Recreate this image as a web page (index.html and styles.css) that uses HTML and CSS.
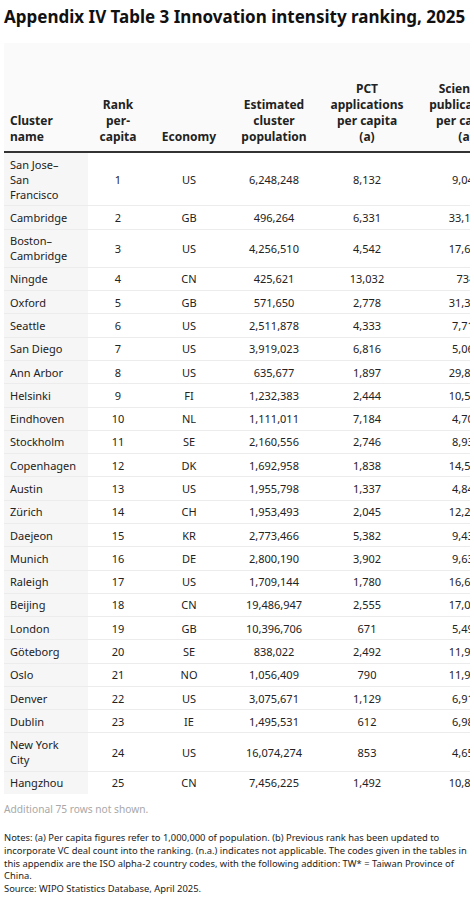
FILE: index.html
```html
<!DOCTYPE html>
<html lang="en">
<head>
<meta charset="utf-8">
<title>Appendix IV Table 3</title>
<link rel="stylesheet" href="styles.css">
</head>
<body>
<div class="page">
  <h1 class="title">Appendix IV Table 3 Innovation intensity ranking, 2025</h1>
  <div class="table-wrap">
    <table class="data">
      <colgroup>
        <col class="c-name"><col class="c-rank"><col class="c-eco"><col class="c-pop"><col class="c-pct"><col class="c-sci"><col class="c-more">
      </colgroup>
      <thead>
        <tr>
          <th class="left">Cluster<br>name</th>
          <th>Rank<br>per-<br>capita</th>
          <th>Economy</th>
          <th>Estimated<br>cluster<br>population</th>
          <th>PCT<br>applications<br>per capita<br>(a)</th>
          <th>Scientific<br>publications<br>per capita<br>(a)</th>
          <th>VC deal<br>count<br>per capita<br>(a)</th>
        </tr>
      </thead>
      <tbody>
        <tr><td class="name">San Jose–<br>San<br>Francisco</td><td>1</td><td>US</td><td>6,248,248</td><td>8,132</td><td>9,044</td><td>326</td></tr>
        <tr><td class="name">Cambridge</td><td>2</td><td>GB</td><td>496,264</td><td>6,331</td><td>33,130</td><td>149</td></tr>
        <tr><td class="name">Boston–<br>Cambridge</td><td>3</td><td>US</td><td>4,256,510</td><td>4,542</td><td>17,614</td><td>131</td></tr>
        <tr><td class="name">Ningde</td><td>4</td><td>CN</td><td>425,621</td><td>13,032</td><td>734</td><td>5</td></tr>
        <tr><td class="name">Oxford</td><td>5</td><td>GB</td><td>571,650</td><td>2,778</td><td>31,346</td><td>79</td></tr>
        <tr><td class="name">Seattle</td><td>6</td><td>US</td><td>2,511,878</td><td>4,333</td><td>7,717</td><td>88</td></tr>
        <tr><td class="name">San Diego</td><td>7</td><td>US</td><td>3,919,023</td><td>6,816</td><td>5,063</td><td>51</td></tr>
        <tr><td class="name">Ann Arbor</td><td>8</td><td>US</td><td>635,677</td><td>1,897</td><td>29,842</td><td>31</td></tr>
        <tr><td class="name">Helsinki</td><td>9</td><td>FI</td><td>1,232,383</td><td>2,444</td><td>10,512</td><td>39</td></tr>
        <tr><td class="name">Eindhoven</td><td>10</td><td>NL</td><td>1,111,011</td><td>7,184</td><td>4,703</td><td>12</td></tr>
        <tr><td class="name">Stockholm</td><td>11</td><td>SE</td><td>2,160,556</td><td>2,746</td><td>8,935</td><td>61</td></tr>
        <tr><td class="name">Copenhagen</td><td>12</td><td>DK</td><td>1,692,958</td><td>1,838</td><td>14,537</td><td>41</td></tr>
        <tr><td class="name">Austin</td><td>13</td><td>US</td><td>1,955,798</td><td>1,337</td><td>4,846</td><td>67</td></tr>
        <tr><td class="name">Zürich</td><td>14</td><td>CH</td><td>1,953,493</td><td>2,045</td><td>12,218</td><td>29</td></tr>
        <tr><td class="name">Daejeon</td><td>15</td><td>KR</td><td>2,773,466</td><td>5,382</td><td>9,431</td><td>8</td></tr>
        <tr><td class="name">Munich</td><td>16</td><td>DE</td><td>2,800,190</td><td>3,902</td><td>9,632</td><td>24</td></tr>
        <tr><td class="name">Raleigh</td><td>17</td><td>US</td><td>1,709,144</td><td>1,780</td><td>16,621</td><td>26</td></tr>
        <tr><td class="name">Beijing</td><td>18</td><td>CN</td><td>19,486,947</td><td>2,555</td><td>17,046</td><td>19</td></tr>
        <tr><td class="name">London</td><td>19</td><td>GB</td><td>10,396,706</td><td>671</td><td>5,491</td><td>47</td></tr>
        <tr><td class="name">Göteborg</td><td>20</td><td>SE</td><td>838,022</td><td>2,492</td><td>11,937</td><td>11</td></tr>
        <tr><td class="name">Oslo</td><td>21</td><td>NO</td><td>1,056,409</td><td>790</td><td>11,962</td><td>33</td></tr>
        <tr><td class="name">Denver</td><td>22</td><td>US</td><td>3,075,671</td><td>1,129</td><td>6,917</td><td>45</td></tr>
        <tr><td class="name">Dublin</td><td>23</td><td>IE</td><td>1,495,531</td><td>612</td><td>6,984</td><td>38</td></tr>
        <tr><td class="name">New York<br>City</td><td>24</td><td>US</td><td>16,074,274</td><td>853</td><td>4,659</td><td>52</td></tr>
        <tr><td class="name">Hangzhou</td><td>25</td><td>CN</td><td>7,456,225</td><td>1,492</td><td>10,823</td><td>9</td></tr>
      </tbody>
    </table>
  </div>
  <p class="more">Additional 75 rows not shown.</p>
  <p class="notes">Notes: (a) Per capita figures refer to 1,000,000 of population. (b) Previous rank has been updated to incorporate VC deal count into the ranking. (n.a.) indicates not applicable. The codes given in the tables in this appendix are the ISO alpha-2 country codes, with the following addition: TW* = Taiwan Province of China.<br>Source: WIPO Statistics Database, April 2025.</p>
</div>
</body>
</html>
```
FILE: styles.css
```css
html, body {
  margin: 0;
  padding: 0;
  background: #ffffff;
}
.page {
  padding: 5px 4px 0;
  font-family: "Noto Sans", "Open Sans", sans-serif;
  color: #222222;
}
.title {
  margin: 0 0 14px;
  font-size: 17px;
  line-height: 24px;
  font-weight: 700;
  color: #111111;
  white-space: nowrap;
}
.table-wrap {
  width: 466px;
  overflow: hidden;
}
.data {
  border-collapse: collapse;
  table-layout: fixed;
  width: 620px;
  font-size: 11px;
}
.c-name { width: 84px; }
.c-rank { width: 60px; }
.c-eco { width: 82px; }
.c-pop { width: 88px; }
.c-pct { width: 98px; }
.c-sci { width: 100px; }
.c-more { width: 108px; }
.data thead th {
  background: #fafafa;
  font-size: 12px;
  line-height: 16px;
  font-weight: 700;
  color: #222222;
  text-align: center;
  vertical-align: bottom;
  padding: 38px 6px 6px;
  border-bottom: 2px solid #333333;
}
.data thead th.left {
  text-align: left;
}
.data tbody td {
  text-align: center;
  vertical-align: middle;
  line-height: 15px;
  padding: 3.65px 6px;
  border-bottom: 1px solid #ececec;
  color: #222222;
}
.data tbody tr:last-child td {
  border-bottom: none;
}
.data tbody td.name {
  text-align: left;
  background: #f6f6f6;
}
.more {
  margin: 8px 0 0;
  font-size: 10.2px;
  line-height: 15px;
  color: #a8a8a8;
}
.notes {
  margin: 15px 0 0;
  font-size: 9.4px;
  line-height: 12.8px;
  color: #222222;
}
```
